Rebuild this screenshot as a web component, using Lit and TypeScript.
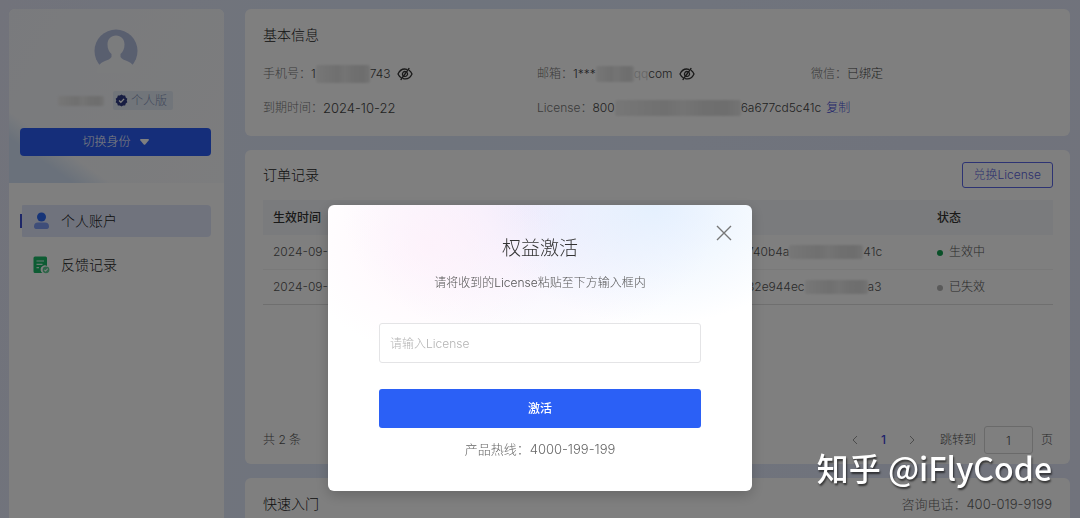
import { LitElement, html, css, svg } from "lit";
import { customElement, property, state } from "lit/decorators.js";

@customElement("masked-text")
class MaskedText extends LitElement {
  @property({ type: Number }) width = 48;
  @property({ type: Number }) height = 18;

  static styles = css`
    :host { display: inline-block; vertical-align: middle; flex: none; }
    .mask {
      display: block;
      border-radius: 2px;
      background: linear-gradient(90deg, #eee 0%, #e6e6e6 22%, #e0e0e0 40%, #e9e9e9 54%, #dfdfdf 70%, #dcdcdc 88%, #e8e8e8 100%);
      filter: blur(1px);
    }
  `;

  render() {
    return html`<span class="mask" style="width:${this.width}px;height:${this.height}px"></span>`;
  }
}

@customElement("eye-off-button")
class EyeOffButton extends LitElement {
  @property() label = "";

  static styles = css`
    :host { display: inline-flex; }
    button { display: flex; padding: 0; border: 0; background: none; color: #333; }
    svg { width: 16px; height: 14px; fill: none; stroke: currentColor; stroke-width: 1.3; stroke-linecap: round; }
  `;

  render() {
    return html`<button type="button" aria-label=${this.label}>
      <svg viewBox="0 0 16 14">
        <path d="M9.800 2.300C5.500 1.200 2.600 3.600 1 7c.8 1.700 1.900 3 3.300 3.800M6.300 11.700C10.500 12.700 13.400 10.400 15 7c-.7-1.500-1.600-2.700-2.700-3.500" />
        <path d="M9.200 4.800A2.600 2.600 0 0 0 5.900 8.600M7.200 9.300A2.600 2.600 0 0 0 10.400 5.900" />
        <path d="M12 1.500 4 12.500" />
      </svg>
    </button>`;
  }
}

@customElement("side-bar")
class SideBar extends LitElement {
  static styles = css`
    :host { display: flex; flex-direction: column; background: #fff; border-radius: 6px 6px 0 0; overflow: hidden; }
    .profile {
      display: flex;
      flex-direction: column;
      align-items: center;
      padding: 20px 13px 27px 11px;
      background:
        linear-gradient(35deg, #d5e3f6 0 14%, rgba(228, 238, 250, 0.5) 20%, transparent 22%),
        linear-gradient(120deg, #f3f5fa, #f9fafc);
    }
    .avatar { width: 44px; height: 44px; }
    .who { display: flex; align-items: center; gap: 9px; margin: 18px 0; height: 19px; }
    .badge {
      display: flex;
      align-items: center;
      gap: 3px;
      height: 19px;
      padding: 0 6px 0 2px;
      background: #e3ebf4;
      border-radius: 2px;
      color: #8593ba;
    }
    .badge svg { width: 13px; height: 13px; }
    .switch {
      display: flex;
      align-items: center;
      justify-content: center;
      gap: 9px;
      width: 100%;
      height: 28px;
      border: 0;
      border-radius: 4px;
      background: #2b5df5;
      color: #fff;
      font: inherit;
    }
    .switch svg { width: 9px; height: 6px; }
    nav { display: flex; flex-direction: column; gap: 12px; padding: 22px 13px 0 11px; }
    a {
      display: flex;
      align-items: center;
      gap: 11px;
      height: 32px;
      padding-left: 13px;
      border-radius: 4px;
      color: #222;
      font-size: 14px;
      text-decoration: none;
    }
    .active { background: linear-gradient(90deg, #fff 2px, #e1e7fb 2px); position: relative; }
    .active::before { content: ""; position: absolute; left: 0; top: 9px; width: 2px; height: 14px; background: #3c4fd0; }
    a svg { width: 17px; height: 18px; }
  `;

  render() {
    return html`
      <div class="profile">
        <svg class="avatar" viewBox="0 0 44 44">
          <circle cx="22" cy="22" r="21.500" fill="#b3bedf" />
          <path
            d="M22 6.500c-5 0-8.500 3.500-8.500 9 0 4 1.500 7.500 4 9.500v3c-1 2-4 3-6.500 4-3 1.200-5 2.500-6.500 5.500L2 45h40l-2.500-7.500c-1.500-3-3.500-4.300-6.500-5.500-2.500-1-5.500-2-6.500-4v-3c2.500-2 4-5.500 4-9.500 0-5.500-3.500-9-8.500-9Z"
            fill="#f6f8fb"
          />
        </svg>
        <div class="who">
          <masked-text width="46" height="10"></masked-text>
          <span class="badge">
            <svg viewBox="0 0 16 16">
              <path
                d="m8 .5 2 1.400 2.500-.1.700 2.400 2 1.500L14.400 8l.8 2.300-2 1.500-.7 2.400-2.500-.1-2 1.400-2-1.400-2.500.1-.7-2.400-2-1.500L1.600 8 .8 5.700l2-1.500.7-2.400 2.500.1Z"
                fill="#2f3b85"
              />
              <path d="m5 8 2.200 2.200L11.200 6" fill="none" stroke="#fff" stroke-width="1.600" />
            </svg>
            个人版
          </span>
        </div>
        <button class="switch" type="button">
          切换身份
          <svg viewBox="0 0 9 6"><path d="M.5 0h8L9 1 5 5.700H4L0 1Z" fill="#fff" /></svg>
        </button>
      </div>
      <nav>
        <a class="active" href="#account">
          <svg viewBox="0 0 17 18">
            <circle cx="8.500" cy="5" r="4.500" fill="#2d68f0" />
            <path d="M5 10.500h7a4 4 0 0 1 4 4c0 1.500-.8 2.500-2 2.500H3c-1.200 0-2-1-2-2.500a4 4 0 0 1 4-4Z" fill="#7f9cf2" />
          </svg>
          个人账户
        </a>
        <a href="#feedback">
          <svg viewBox="0 0 17 18">
            <path d="M2 .5h10.500A1.500 1.500 0 0 1 14 2v8a4 4 0 0 0-4.500 7H2A1.500 1.500 0 0 1 .5 15.500V2A1.500 1.500 0 0 1 2 .5Z" fill="#1bb867" />
            <path d="M3.500 5h7.500M3.500 8.300h6M3.500 11.600h2.500" stroke="#d8f5e6" stroke-width="1.200" />
            <circle cx="13" cy="13.800" r="3.400" fill="#5fca92" />
            <path d="m11.400 13.800 1.200 1.200 2.100-2.400" fill="none" stroke="#fff" stroke-width="1.100" />
          </svg>
          反馈记录
        </a>
      </nav>
    `;
  }
}

@customElement("activate-dialog")
class ActivateDialog extends LitElement {
  @state() private code = "";

  static styles = css`
    :host { display: block; }
    .dialog {
      position: relative;
      box-sizing: border-box;
      width: 424px;
      max-width: 100%;
      padding: 30px 51px 32px;
      border-radius: 6px;
      background:
        radial-gradient(ellipse 130px 110px at 24% 14%, rgba(255, 240, 250, 0.7), transparent),
        radial-gradient(ellipse 170px 120px at 77% 0, rgba(226, 239, 254, 0.9), transparent),
        radial-gradient(ellipse 190px 140px at 48% 0, rgba(240, 233, 252, 0.9), transparent),
        #fff;
      box-shadow: 0 4px 14px rgba(0, 0, 0, 0.2);
      text-align: center;
      color: #555;
    }
    h2 { margin: 0; font-size: 19px; line-height: 28px; font-weight: 300; color: #333; }
    p { margin: 0; line-height: 20px; }
    .hint { margin-top: 10px; }
    .close { position: absolute; top: 20px; right: 20px; display: flex; padding: 0; border: 0; background: none; }
    .close svg { width: 16px; height: 16px; }
    input {
      box-sizing: border-box;
      display: block;
      width: 100%;
      height: 40px;
      margin: 30px 0 26px;
      padding: 0 10px;
      border: 1px solid #e4e4e6;
      border-radius: 3px;
      background: #fff;
      font: inherit;
      color: #333;
    }
    input::placeholder { color: #b4b4b4; opacity: 1; }
    .submit {
      display: block;
      width: 100%;
      height: 39px;
      border: 0;
      border-radius: 3px;
      background: #2b60f6;
      color: #fff;
      font: inherit;
      font-weight: 500;
    }
    .hotline { margin-top: 11px; font-size: 13px; color: #666; }
  `;

  render() {
    return html`
      <div class="dialog" role="dialog" aria-modal="true" aria-labelledby="title">
        <button class="close" type="button" aria-label="关闭">
          <svg viewBox="0 0 16 16"><path d="m1 1 14 14M15 1 1 15" stroke="#777" stroke-width="1.400" /></svg>
        </button>
        <h2 id="title">权益激活</h2>
        <p class="hint"><label for="code">请将收到的License粘贴至下方输入框内</label></p>
        <input
          id="code"
          placeholder="请输入License"
          .value=${this.code}
          @input=${(e: Event) => (this.code = (e.target as HTMLInputElement).value)}
        />
        <button class="submit" type="button">激活</button>
        <p class="hotline">产品热线：4000-199-199</p>
      </div>
    `;
  }
}

const orders = [
  { date: "2024-09-22", head: "740b4a", mask: 74, tail: "41c", status: "生效中", on: true },
  { date: "2024-09-22", head: "32e944ec", mask: 63, tail: "a3", status: "已失效", on: false },
];

const chevron = (d: string) => html`<svg viewBox="0 0 6 10">${svg`<path d=${d} />`}</svg>`;

@customElement("app-root")
class AppRoot extends LitElement {
  static styles = css`
    :host {
      display: block;
      font-family: Inter, "Noto Sans CJK SC", sans-serif;
      font-size: 12px;
      font-weight: 300;
      line-height: 20px;
      color: #444;
    }
    .page {
      box-sizing: border-box;
      display: grid;
      grid-template-columns: 215px minmax(0, 1fr);
      gap: 21px;
      height: 100vh;
      overflow: hidden;
      padding: 9px 10px 0 9px;
      background: linear-gradient(100deg, #e4e7f7, #dfe9fb 40%, #e2e6f8);
    }
    main { display: flex; flex-direction: column; gap: 14px; }
    .card { padding: 16px 18px 18px; border-radius: 6px; background: #fff; }
    .grow { flex: 1 0 auto; }
    h1 { margin: 0; font-size: 14px; line-height: 20px; font-weight: 300; color: #222; }
    .head { display: flex; align-items: center; justify-content: space-between; }
    .facts { display: grid; grid-template-columns: repeat(3, minmax(0, 1fr)); gap: 14px 33px; margin: 19px 0 0; }
    .fact { display: flex; white-space: nowrap; height: 20px; }
    dt { color: #777; }
    dd { display: flex; align-items: center; margin: 0; }
    dd eye-off-button { margin-left: 6px; }
    .date, .service { font-size: 13px; }
    .faint { color: #ccc; }
    .copy { margin-left: 5px; color: #4a50d8; text-decoration: none; }
    .orders { padding: 12px 17px 10px 18px; }
    .redeem {
      height: 26px;
      padding: 0 11px;
      border: 1px solid #5a66e6;
      border-radius: 3px;
      background: #fff;
      color: #5a62dc;
      font: inherit;
    }
    .list { min-height: 238px; padding-top: 12px; box-sizing: border-box; }
    table { width: 100%; border-collapse: collapse; table-layout: fixed; }
    th, td { height: 34px; padding: 0 10px; text-align: left; white-space: nowrap; }
    th { height: 35px; background: #f5f7fa; font-weight: 500; color: #333; }
    td { border-bottom: 1px solid #f2f2f2; color: #555; }
    tr:last-child td { border-bottom-color: #dedede; }
    .start, .end { width: 140px; }
    .state { width: 106px; }
    .serial { display: flex; align-items: center; }
    .dot { display: inline-block; width: 6px; height: 6px; margin-right: 6px; border-radius: 50%; background: #b5b5b5; vertical-align: middle; }
    .on { background: #12a150; }
    .pager { display: flex; align-items: center; justify-content: space-between; color: #555; }
    .pages, .jump { display: flex; align-items: center; }
    .pages { gap: 23px; margin-right: 25px; }
    .jump { gap: 8px; }
    .right { display: flex; align-items: center; }
    .step { display: flex; padding: 0; border: 0; background: none; }
    .step svg { width: 6px; height: 10px; fill: none; stroke: #999; }
    .current { color: #3c46d8; font-weight: 500; }
    .jump input {
      box-sizing: border-box;
      width: 49px;
      height: 28px;
      border: 1px solid #d4d4d4;
      border-radius: 3px;
      background: #fff;
      color: #555;
      font: inherit;
      text-align: center;
    }
    .service { color: #666; }
    .overlay {
      position: fixed;
      inset: 0;
      display: flex;
      justify-content: center;
      align-items: flex-start;
      padding-top: 205px;
      background: rgba(0, 0, 0, 0.5);
    }
    .watermark {
      position: fixed;
      right: 28px;
      bottom: 34px;
      font: 500 32px/34px "Noto Sans CJK SC", sans-serif;
      color: #fff;
      text-shadow: 1px 2px 2px rgba(0, 0, 0, 0.6);
    }
  `;

  render() {
    return html`
      <div class="page">
        <side-bar></side-bar>
        <main>
          <section class="card">
            <h1>基本信息</h1>
            <dl class="facts">
              <div class="fact">
                <dt>手机号：</dt>
                <dd>1<masked-text width="54" height="18"></masked-text>743<eye-off-button label="显示手机号"></eye-off-button></dd>
              </div>
              <div class="fact">
                <dt>邮箱：</dt>
                <dd>
                  1***<masked-text width="38" height="16"></masked-text><span class="faint">qq</span>com<eye-off-button label="显示邮箱"></eye-off-button>
                </dd>
              </div>
              <div class="fact"><dt>微信：</dt><dd>已绑定</dd></div>
              <div class="fact"><dt>到期时间：</dt><dd class="date">2024-10-22</dd></div>
              <div class="fact">
                <dt>License：</dt>
                <dd>800<masked-text width="126" height="16"></masked-text>6a677cd5c41c<a class="copy" href="#copy">复制</a></dd>
              </div>
            </dl>
          </section>

          <section class="card orders">
            <div class="head">
              <h1>订单记录</h1>
              <button class="redeem" type="button">兑换License</button>
            </div>
            <div class="list">
              <table>
                <thead>
                  <tr><th class="start">生效时间</th><th class="end">到期时间</th><th>License</th><th class="state">状态</th></tr>
                </thead>
                <tbody>
                  ${orders.map(
                    (o) => html`<tr>
                      <td>${o.date}</td>
                      <td></td>
                      <td>
                        <span class="serial"
                          ><masked-text width="154" height="14"></masked-text>${o.head}<masked-text width=${o.mask} height="14"></masked-text
                          >${o.tail}</span
                        >
                      </td>
                      <td><span class="dot ${o.on ? "on" : ""}"></span>${o.status}</td>
                    </tr>`
                  )}
                </tbody>
              </table>
            </div>
            <div class="pager">
              <span>共 2 条</span>
              <div class="right">
                <div class="pages">
                  <button class="step" type="button" aria-label="上一页">${chevron("M5 1 1 5l4 4")}</button>
                  <span class="current">1</span>
                  <button class="step" type="button" aria-label="下一页">${chevron("m1 1 4 4-4 4")}</button>
                </div>
                <div class="jump"><label for="jump">跳转到</label><input id="jump" value="1" /><span>页</span></div>
              </div>
            </div>
          </section>

          <section class="card grow">
            <div class="head">
              <h1>快速入门</h1>
              <span class="service">咨询电话：400-019-9199</span>
            </div>
          </section>
        </main>
      </div>
      <div class="overlay"><activate-dialog></activate-dialog></div>
      <div class="watermark">知乎 @iFlyCode</div>
    `;
  }
}
